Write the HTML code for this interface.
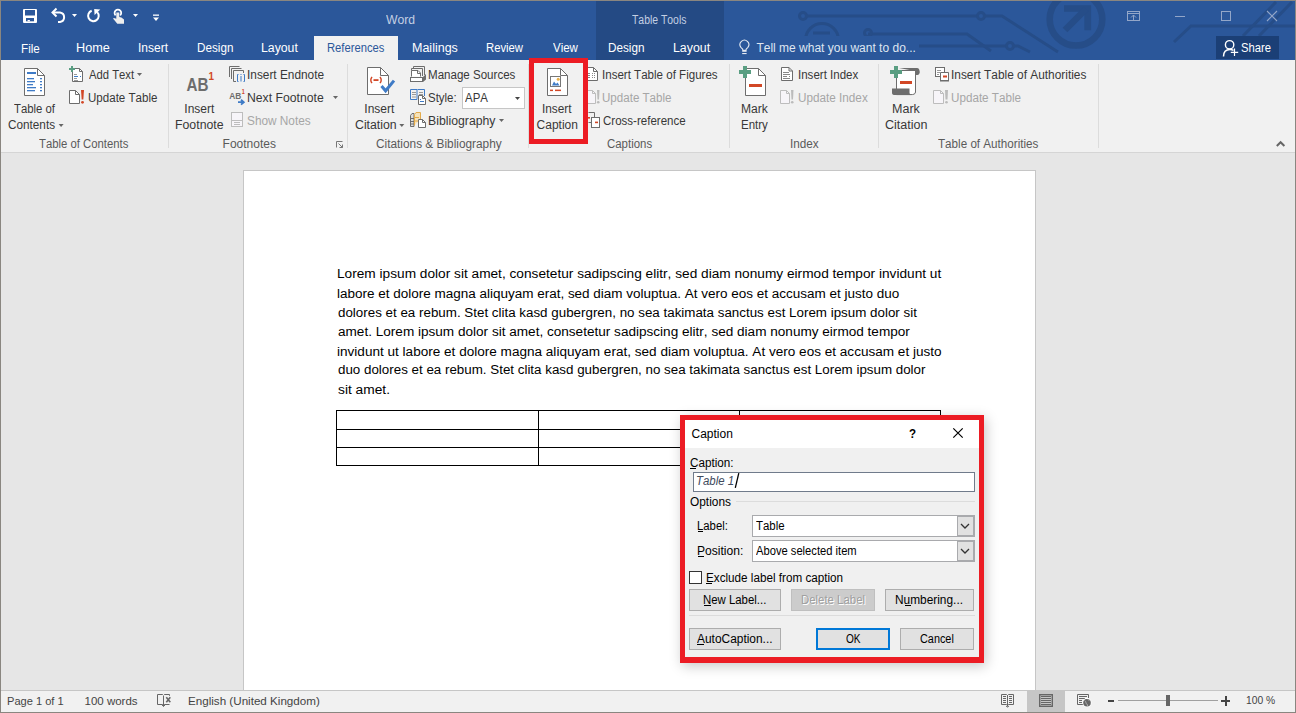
<!DOCTYPE html>
<html><head><meta charset="utf-8"><style>
html,body{margin:0;padding:0;width:1296px;height:713px;overflow:hidden;background:#8c8c8c}
body>div,body>span,body>svg{position:absolute;display:block}
.t{white-space:nowrap;line-height:1;font-family:"Liberation Sans",sans-serif;transform-origin:0 0;font-kerning:none}
</style></head><body>
<div style="left:0px;top:0px;width:1296px;height:713px;background:#8a8680;"></div>
<div style="left:1px;top:1px;width:1294px;height:59px;background:#2b579a;"></div>
<div style="left:596px;top:1px;width:128px;height:59px;background:#244a84;"></div>
<svg style="left:1px;top:1px" width="1294" height="59" viewBox="1 1 1294 59">
<g stroke="#264d88" stroke-width="3" fill="none">
<circle cx="803" cy="16" r="3.5"/><path d="M806 16H977"/><circle cx="981" cy="16" r="3.5"/><path d="M984 16H1002L1058 52"/>
<path d="M868 34H967L991 51"/><circle cx="868" cy="33" r="3.5"/>
<path d="M805.5 40A16.5 16.5 0 0 1 838.5 40"/><path d="M813 33H830"/>
<path d="M918 46H1006"/><circle cx="1010" cy="46" r="3.5"/><path d="M1013 46H1018L1030 52"/>
<circle cx="1076" cy="19.2" r="26.3" stroke-width="6.6"/>
<path d="M1064 8.5H1087.7V30.2" stroke-width="6.7"/><path d="M1065 30L1086 9" stroke-width="6.7"/>
<path d="M1174 42L1191 26H1296"/>
<path d="M1243 36L1276 2M1259 36L1292 2"/>
</g></svg>
<div style="left:724px;top:36px;width:195px;height:24px;background:#2b579a;"></div>
<span class="t" style="left:386.00px;top:14px;font-size:12px;color:#c3cfe3;transform:scaleX(1.0143);">Word</span>
<span class="t" style="left:632.00px;top:14px;font-size:12px;color:#c3cfe3;transform:scaleX(0.8683);">Table Tools</span>
<span class="t" style="left:20.53px;top:43px;font-size:12px;color:#ffffff;transform:scaleX(0.9722);">File</span>
<span class="t" style="left:76.25px;top:42px;font-size:12px;color:#ffffff;transform:scaleX(1.0548);">Home</span>
<span class="t" style="left:138.00px;top:42px;font-size:12px;color:#ffffff;">Insert</span>
<span class="t" style="left:196.53px;top:42px;font-size:12px;color:#ffffff;transform:scaleX(0.9750);">Design</span>
<span class="t" style="left:261.18px;top:42px;font-size:12px;color:#ffffff;transform:scaleX(1.0229);">Layout</span>
<span class="t" style="left:412.16px;top:42px;font-size:12px;color:#ffffff;transform:scaleX(1.0419);">Mailings</span>
<span class="t" style="left:486.36px;top:42px;font-size:12px;color:#ffffff;transform:scaleX(0.9410);">Review</span>
<span class="t" style="left:552.80px;top:42px;font-size:12px;color:#ffffff;transform:scaleX(0.9577);">View</span>
<span class="t" style="left:608.32px;top:42px;font-size:12px;color:#ffffff;transform:scaleX(0.9778);">Design</span>
<span class="t" style="left:673.17px;top:42px;font-size:12px;color:#ffffff;transform:scaleX(1.0286);">Layout</span>
<div style="left:314px;top:36px;width:84px;height:24px;background:#f1f1f1;"></div>
<span class="t" style="left:326.66px;top:42px;font-size:12px;color:#2b579a;transform:scaleX(0.9367);">References</span>
<span class="t" style="left:756.40px;top:42px;font-size:12px;color:#dfe6f1;">Tell me what you want to do...</span>
<div style="left:1216px;top:36px;width:63px;height:23px;background:#1b3f76;"></div>
<span class="t" style="left:1241.06px;top:42px;font-size:12px;color:#ffffff;transform:scaleX(0.9355);">Share</span>
<div style="left:1px;top:60px;width:1294px;height:92px;background:#f1f1f1;"></div>
<div style="left:1px;top:152px;width:1294px;height:1px;background:#d5d5d5;"></div>
<div style="left:168px;top:64px;width:1px;height:84px;background:#dcdcdc;"></div>
<div style="left:347px;top:64px;width:1px;height:84px;background:#dcdcdc;"></div>
<div style="left:729px;top:64px;width:1px;height:84px;background:#dcdcdc;"></div>
<div style="left:878px;top:64px;width:1px;height:84px;background:#dcdcdc;"></div>
<div style="left:1098px;top:64px;width:1px;height:84px;background:#dcdcdc;"></div>
<div style="left:528px;top:64px;width:1px;height:84px;background:#dcdcdc;"></div>
<span class="t" style="left:14.40px;top:103px;font-size:12px;color:#383838;transform:scaleX(0.9455);">Table of</span>
<span class="t" style="left:7.60px;top:119px;font-size:12px;color:#383838;transform:scaleX(0.9792);">Contents</span>
<span class="t" style="left:88.60px;top:69px;font-size:12px;color:#383838;transform:scaleX(0.9396);">Add Text</span>
<span class="t" style="left:87.64px;top:92px;font-size:12px;color:#383838;transform:scaleX(0.9634);">Update Table</span>
<span class="t" style="left:39.00px;top:138px;font-size:12px;color:#5a5a5a;transform:scaleX(0.9432);">Table of Contents</span>
<span class="t" style="left:184.30px;top:103px;font-size:12px;color:#383838;">Insert</span>
<span class="t" style="left:174.67px;top:119px;font-size:12px;color:#383838;transform:scaleX(1.0261);">Footnote</span>
<span class="t" style="left:247.01px;top:69px;font-size:12px;color:#383838;transform:scaleX(0.9870);">Insert Endnote</span>
<span class="t" style="left:246.98px;top:92px;font-size:12px;color:#383838;transform:scaleX(1.0176);">Next Footnote</span>
<span class="t" style="left:247.02px;top:115px;font-size:12px;color:#a6a6a6;transform:scaleX(0.9844);">Show Notes</span>
<span class="t" style="left:222.60px;top:138px;font-size:12px;color:#5a5a5a;">Footnotes</span>
<span class="t" style="left:364.30px;top:103px;font-size:12px;color:#383838;">Insert</span>
<span class="t" style="left:354.70px;top:119px;font-size:12px;color:#383838;transform:scaleX(1.0250);">Citation</span>
<span class="t" style="left:428.34px;top:69px;font-size:12px;color:#383838;transform:scaleX(0.9633);">Manage Sources</span>
<span class="t" style="left:428.35px;top:92px;font-size:12px;color:#383838;transform:scaleX(0.9536);">Style:</span>
<span class="t" style="left:428.28px;top:115px;font-size:12px;color:#383838;transform:scaleX(1.0215);">Bibliography</span>
<span class="t" style="left:375.70px;top:138px;font-size:12px;color:#5a5a5a;transform:scaleX(0.9867);">Citations &amp; Bibliography</span>
<span class="t" style="left:542.21px;top:103px;font-size:12px;color:#383838;transform:scaleX(0.9862);">Insert</span>
<span class="t" style="left:536.60px;top:119px;font-size:12px;color:#383838;">Caption</span>
<span class="t" style="left:602.34px;top:69px;font-size:12px;color:#383838;transform:scaleX(0.9630);">Insert Table of Figures</span>
<span class="t" style="left:602.34px;top:92px;font-size:12px;color:#a6a6a6;transform:scaleX(0.9648);">Update Table</span>
<span class="t" style="left:603.30px;top:115px;font-size:12px;color:#383838;transform:scaleX(0.9605);">Cross-reference</span>
<span class="t" style="left:606.60px;top:138px;font-size:12px;color:#5a5a5a;transform:scaleX(0.9532);">Captions</span>
<span class="t" style="left:740.79px;top:103px;font-size:12px;color:#383838;transform:scaleX(1.0077);">Mark</span>
<span class="t" style="left:740.84px;top:119px;font-size:12px;color:#383838;transform:scaleX(0.9593);">Entry</span>
<span class="t" style="left:797.64px;top:69px;font-size:12px;color:#383838;transform:scaleX(0.9613);">Insert Index</span>
<span class="t" style="left:797.62px;top:92px;font-size:12px;color:#a6a6a6;transform:scaleX(0.9771);">Update Index</span>
<span class="t" style="left:789.52px;top:138px;font-size:12px;color:#5a5a5a;transform:scaleX(0.9786);">Index</span>
<span class="t" style="left:892.46px;top:103px;font-size:12px;color:#383838;transform:scaleX(1.0423);">Mark</span>
<span class="t" style="left:885.00px;top:119px;font-size:12px;color:#383838;transform:scaleX(1.0450);">Citation</span>
<span class="t" style="left:951.01px;top:69px;font-size:12px;color:#383838;transform:scaleX(0.9904);">Insert Table of Authorities</span>
<span class="t" style="left:951.03px;top:92px;font-size:12px;color:#a6a6a6;transform:scaleX(0.9718);">Update Table</span>
<span class="t" style="left:938.00px;top:138px;font-size:12px;color:#5a5a5a;transform:scaleX(0.9709);">Table of Authorities</span>
<div style="left:462px;top:87px;width:63px;height:22px;background:#ffffff;box-shadow:inset 0 0 0 1px #c6c6c6"></div>
<span class="t" style="left:465.00px;top:92px;font-size:12px;color:#383838;transform:scaleX(0.9542);">APA</span>
<svg style="left:0;top:0" width="1296" height="160" viewBox="0 0 1296 160"><rect x="23" y="9" width="14" height="14" rx="1" fill="#fff"/><rect x="25" y="10" width="10" height="5.5" fill="#2b579a"/><rect x="26" y="18" width="8" height="3.3" fill="#2b579a"/><rect x="27.6" y="20" width="2.3" height="1.3" fill="#fff"/><path d="M53 12.5H60A4.8 4.8 0 0 1 60 22H58" fill="none" stroke="#fff" stroke-width="2"/><path d="M56.5 8.5L52.5 12.5L56.5 16.5" fill="none" stroke="#fff" stroke-width="2"/><path d="M72 14H77L74.5 17Z" fill="#fff"/><path d="M91.7 10.8A5.3 5.3 0 1 0 97.2 12.1" fill="none" stroke="#fff" stroke-width="2"/><path d="M94.2 9L100.3 9.6L94.6 15Z" fill="#fff"/><path d="M115.6 15.3A3.3 3.3 0 1 1 120.2 15.3" fill="none" stroke="#fff" stroke-width="1.8"/><path d="M116.3 12.5V18.8L114 18L113 18.6L117.3 23.8H124V19.6L121.4 17.6L119.3 17V12.5Z" fill="#eee"/><path d="M133 14H138L135.5 17Z" fill="#fff"/><rect x="153" y="14.5" width="6" height="1.3" fill="#fff"/><path d="M153 17.5H159L156 21Z" fill="#fff"/><rect x="1127.5" y="11.5" width="12" height="9" fill="none" stroke="#93a6c8"/><path d="M1127.5 13.5H1139.5M1133.5 20V15M1131 17.5L1133.5 15L1136 17.5" fill="none" stroke="#93a6c8"/><path d="M1175 16.5H1185" stroke="#93a6c8"/><rect x="1221.5" y="11.5" width="9" height="9" fill="none" stroke="#93a6c8"/><path d="M1267 11L1277 21M1277 11L1267 21" stroke="#93a6c8" stroke-width="1.1"/><circle cx="1229.6" cy="44.8" r="4.2" fill="none" stroke="#fff" stroke-width="1.4"/><path d="M1223.5 56.5C1223.5 52 1226 49.5 1230 49.5C1231.5 49.5 1232.5 49.8 1233.5 50.3" fill="none" stroke="#fff" stroke-width="1.5"/><path d="M1234.5 48.6V56M1230.8 52.3H1238.2" stroke="#fff" stroke-width="1.2"/><path d="M742.7 50V49.2L740.9 47.3A4.4 4.4 0 1 1 747.9 47.3L746.1 49.2V50" fill="none" stroke="#e4e9f2" stroke-width="1.1"/><rect x="742.2" y="49.8" width="4.4" height="2" fill="#e4e9f2"/><rect x="742.2" y="53" width="4.4" height="1.1" fill="#e4e9f2"/><path d="M24.5 68.5H37.5L44.5 75.5V95.5H24.5Z" fill="#fff" stroke="#6d6d6d" stroke-width="1"/><path d="M37.5 68.5V75.5H44.5" fill="none" stroke="#6d6d6d" stroke-width="1"/><rect x="27" y="72" width="9" height="2" fill="#3f7bc6"/><rect x="27" y="78" width="7" height="1.3" fill="#3f7bc6"/><rect x="40" y="78" width="2" height="1.3" fill="#3f7bc6"/><rect x="27" y="81" width="8" height="1.3" fill="#3f7bc6"/><rect x="40" y="81" width="2" height="1.3" fill="#3f7bc6"/><rect x="27" y="84" width="6" height="1.3" fill="#3f7bc6"/><rect x="40" y="84" width="2" height="1.3" fill="#3f7bc6"/><rect x="27" y="87" width="9" height="1.3" fill="#3f7bc6"/><rect x="40" y="87" width="2" height="1.3" fill="#3f7bc6"/><rect x="27" y="90" width="8" height="1.3" fill="#3f7bc6"/><rect x="40" y="90" width="2" height="1.3" fill="#3f7bc6"/><path d="M58.6 124H63.6L61.1 127Z" fill="#666"/><path d="M72.5 68.5H79.5L82.5 71.5V81.5H72.5Z" fill="#fff" stroke="#6d6d6d" stroke-width="1"/><path d="M79.5 68.5V71.5H82.5" fill="none" stroke="#6d6d6d" stroke-width="1"/><rect x="74" y="74" width="3" height="1" fill="#999"/><rect x="74" y="76" width="4" height="1" fill="#3f7bc6"/><rect x="80" y="76" width="1" height="1" fill="#3f7bc6"/><rect x="74" y="78" width="3" height="1" fill="#999"/><rect x="74" y="80" width="4" height="1" fill="#999"/><rect x="69" y="68" width="6" height="2" fill="#5a9e82"/><rect x="71" y="66" width="2" height="6" fill="#5a9e82"/><path d="M137 73H142L139.5 76Z" fill="#666"/><path d="M69.5 90.5H75.5L79.5 94.5V103.5H69.5Z" fill="#fff" stroke="#6d6d6d" stroke-width="1"/><path d="M75.5 90.5V94.5H79.5" fill="none" stroke="#6d6d6d" stroke-width="1"/><path d="M81 90H84L83.3 99.5H81.7Z" fill="#d24726"/><circle cx="82.5" cy="102.3" r="1.4" fill="#d24726"/><text x="186.5" y="91" font-family="Liberation Sans" font-weight="bold" font-size="17.5" fill="#6d6d6d" textLength="22" lengthAdjust="spacingAndGlyphs">AB</text><text x="208.5" y="80" font-family="Liberation Sans" font-weight="bold" font-size="11" fill="#d24726" textLength="5.5" lengthAdjust="spacingAndGlyphs">1</text><path d="M229.5 77V66.5H239.5M231.5 79V68.5H241.5M233.5 81.5V70.5H243.5" fill="none" stroke="#6d6d6d"/><path d="M233.5 81.5H236" fill="none" stroke="#6d6d6d"/><path d="M243.5 70.5V73" fill="none" stroke="#6d6d6d"/><path d="M238.5 74.5H237.5V81.5H238.5M243.5 74.5H244.5V81.5H243.5" fill="none" stroke="#3f7bc6"/><rect x="240.5" y="74" width="1" height="1" fill="#3f7bc6"/><rect x="240.5" y="76" width="1" height="5.5" fill="#3f7bc6"/><text x="229.3" y="98.8" font-family="Liberation Sans" font-weight="bold" font-size="9" fill="#6d6d6d" textLength="12" lengthAdjust="spacingAndGlyphs">AB</text><text x="241.8" y="94" font-family="Liberation Sans" font-weight="bold" font-size="6.5" fill="#d24726" textLength="3" lengthAdjust="spacingAndGlyphs">1</text><path d="M238 102.2H243.5M241 99.8L243.8 102.2L241 104.6" fill="none" stroke="#3f7bc6" stroke-width="1.8"/><path d="M333 96H338L335.5 99Z" fill="#666"/><rect x="231.5" y="112.5" width="11" height="14" fill="#f7f5f9" stroke="#bdbdbd"/><path d="M231.5 120.5H242.5M234 122.5H240M234 124.5H240" stroke="#bdbdbd"/><path d="M336.5 147.5V141.5H342.5" fill="none" stroke="#777"/><path d="M338.5 143.5L342.5 147.5M342.5 144.5V147.5H339.5" fill="none" stroke="#777"/><path d="M367.5 67.5H380.5L388.5 75.5V94.5H367.5Z" fill="#fff" stroke="#6d6d6d" stroke-width="1"/><path d="M380.5 67.5V75.5H388.5" fill="none" stroke="#6d6d6d" stroke-width="1"/><path d="M372 76.8Q369.6 80 372 83.2M380 76.8Q382.4 80 380 83.2" fill="none" stroke="#d24726" stroke-width="1.4"/><rect x="373.5" y="79.2" width="5" height="1.8" fill="#d24726"/><path d="M381.5 86L385.6 90.8L394 80.6" fill="none" stroke="#3f7bc6" stroke-width="3"/><path d="M399.3 124H404.3L401.8 127Z" fill="#666"/><path d="M413.5 69V66.5H424.5V75M411.5 70.5V68.5H422.5V76" fill="none" stroke="#6d6d6d"/><path d="M411.5 76.5V70.5H418L420.5 73V76.5" fill="#fff" stroke="#6d6d6d"/><path d="M417.5 70.5V73.5H420.5" fill="none" stroke="#6d6d6d"/><rect x="410.5" y="77.5" width="12" height="4" fill="#fff" stroke="#6d6d6d"/><path d="M423 77L426 74V79.5L423 82Z" fill="#6d6d6d"/><path d="M410.5 89.5H417V99.5H410.5ZM417.5 89.5H424.5V96" fill="none" stroke="#3f7bc6"/><path d="M412 92.5H416M412 94.5H416M412 97H416M419 92.5H423M419 94.5H423" stroke="#999" stroke-width="1"/><path d="M418.5 95.5H422.5L425.5 98.5V104.5H418.5Z" fill="#fff" stroke="#6d6d6d" stroke-width="1"/><path d="M422.5 95.5V98.5H425.5" fill="none" stroke="#6d6d6d" stroke-width="1"/><rect x="420" y="101" width="4" height="1" fill="#3f7bc6"/><rect x="420" y="99" width="1" height="1" fill="#3f7bc6"/><path d="M410.5 126.5V115.5L412 113.5H414V126.5Z" fill="#ddd" stroke="#6d6d6d"/><path d="M410.5 118.5H414M410.5 121.5H414M410.5 124H414" stroke="#6d6d6d"/><path d="M414.5 125.5V114.5L416 112.5H420.5V119" fill="#f6e2b8" stroke="#e3aa4a"/><path d="M415 117.5H419M415 121H418" stroke="#e3aa4a"/><path d="M418.5 119.5H422.5L425.5 122.5V127.5H418.5Z" fill="#fff" stroke="#6d6d6d" stroke-width="1"/><path d="M422.5 119.5V122.5H425.5" fill="none" stroke="#6d6d6d" stroke-width="1"/><path d="M499 119H504L501.5 122Z" fill="#666"/><path d="M515 97H520L517.5 100Z" fill="#444"/><path d="M547.5 68.5H560.5L567.5 75.5V95.5H547.5Z" fill="#fff" stroke="#6d6d6d" stroke-width="1"/><path d="M560.5 68.5V75.5H567.5" fill="none" stroke="#6d6d6d" stroke-width="1"/><rect x="550.5" y="76.5" width="10" height="10" fill="#fff" stroke="#777"/><path d="M552 85.5L554 81.5L556 84L557.5 82.5L559.5 85.5Z" fill="#3f7bc6"/><circle cx="558.2" cy="79.3" r="1.5" fill="#e8b04a"/><rect x="550" y="89.6" width="3" height="1.5" fill="#d24726"/><rect x="555" y="89.6" width="6" height="1.5" fill="#d24726"/><path d="M584.5 67.5H593.5L597.5 71.5V80.5H584.5Z" fill="#fff" stroke="#6d6d6d" stroke-width="1"/><path d="M593.5 67.5V71.5H597.5" fill="none" stroke="#6d6d6d" stroke-width="1"/><path d="M586 73.5H590M586 75.5H590M586 77.5H590" stroke="#888"/><path d="M592 73.5H593M594 73.5H595M592 75.5H593M594 75.5H595M592 77.5H593M594 77.5H595" stroke="#888"/><path d="M586.5 90.5H592.5L595.5 93.5V103.5H586.5Z" fill="#f7f5f9" stroke="#bdbdbd" stroke-width="1"/><path d="M592.5 90.5V93.5H595.5" fill="none" stroke="#bdbdbd" stroke-width="1"/><path d="M597 90H599.5L599 99.5H597.5Z" fill="#bbb"/><circle cx="598.2" cy="102.3" r="1.3" fill="#bbb"/><path d="M588.5 112.5H594.5V117M588.5 122.5H591.5" fill="none" stroke="#6d6d6d"/><rect x="591.5" y="117.5" width="8" height="10" fill="#fff" stroke="#6d6d6d"/><rect x="586" y="117" width="4" height="1.6" fill="#d24726"/><rect x="595" y="121.6" width="3" height="1.6" fill="#d24726"/><path d="M745.5 68.5H758.5L765.5 75.5V95.5H745.5Z" fill="#fff" stroke="#6d6d6d" stroke-width="1"/><path d="M758.5 68.5V75.5H765.5" fill="none" stroke="#6d6d6d" stroke-width="1"/><rect x="739" y="70" width="12" height="4" fill="#5a9e82"/><rect x="743" y="66" width="4" height="12" fill="#5a9e82"/><rect x="749" y="84" width="13" height="3" fill="#d24726"/><path d="M781.5 67.5H789.0L792.5 71.0V80.5H781.5Z" fill="#fff" stroke="#6d6d6d" stroke-width="1"/><path d="M789.0 67.5V71.0H792.5" fill="none" stroke="#6d6d6d" stroke-width="1"/><path d="M783 72.5H789M783 74.5H790M783 76.5H787M789 76.5H790M783 78.5H790" stroke="#888"/><path d="M780.5 90.5H786.5L789.5 93.5V103.5H780.5Z" fill="#f7f5f9" stroke="#bdbdbd" stroke-width="1"/><path d="M786.5 90.5V93.5H789.5" fill="none" stroke="#bdbdbd" stroke-width="1"/><path d="M791 90H793.5L793 99.5H791.5Z" fill="#bbb"/><circle cx="792.2" cy="102.3" r="1.3" fill="#bbb"/><path d="M896.5 70.5H917.5C919.5 70.5 919.5 74.5 917.5 74.5H915.5V92C915.5 94.3 913 94.6 911 94.6H896.5Z" fill="#fff" stroke="#6d6d6d"/><path d="M899 68H917C920.5 68 920.5 75 917 75H915V71Z" fill="#6d6d6d"/><path d="M892 88.5H909.5V92.5C909.5 94 910.5 95 912 95H894C892.5 95 892 94 892 92.5Z" fill="#6d6d6d"/><rect x="890" y="70" width="12" height="4" fill="#5a9e82"/><rect x="894" y="66" width="4" height="12" fill="#5a9e82"/><rect x="900" y="81" width="12" height="3" fill="#d24726"/><rect x="935.5" y="67.5" width="9" height="9" fill="#fff" stroke="#6d6d6d"/><path d="M937 70.5H941M937 72.5H940M937 74.5H939" stroke="#999"/><path d="M940.5 72.5H948.5V80.5H940.5Z" fill="#fff" stroke="#6d6d6d"/><rect x="943" y="75.5" width="4" height="2" fill="#d24726"/><rect x="940" y="80" width="9" height="1.5" fill="#6d6d6d"/><path d="M933.5 90.5H940.5L943.5 93.5V103.5H933.5Z" fill="#f7f5f9" stroke="#bdbdbd" stroke-width="1"/><path d="M940.5 90.5V93.5H943.5" fill="none" stroke="#bdbdbd" stroke-width="1"/><path d="M945 90H948L947.5 99.5H945.5Z" fill="#bbb"/><circle cx="946.5" cy="102.3" r="1.3" fill="#bbb"/><path d="M1276.8 146L1280.6 142.2L1284.4 146" fill="none" stroke="#666" stroke-width="2"/></svg>
<div style="left:1px;top:153px;width:1294px;height:537px;background:#e6e6e6;"></div>
<div style="left:243px;top:170px;width:793px;height:520px;background:#c6c6c6;"></div>
<div style="left:244px;top:171px;width:791px;height:519px;background:#ffffff;"></div>
<span class="t" style="left:336.71px;top:268px;font-size:12.5px;color:#000;transform:scaleX(1.0940);">Lorem ipsum dolor sit amet, consetetur sadipscing elitr, sed diam nonumy eirmod tempor invidunt ut</span>
<span class="t" style="left:336.72px;top:288px;font-size:12.5px;color:#000;transform:scaleX(1.0788);">labore et dolore magna aliquyam erat, sed diam voluptua. At vero eos et accusam et justo duo</span>
<span class="t" style="left:337.80px;top:307px;font-size:12.5px;color:#000;transform:scaleX(1.0695);">dolores et ea rebum. Stet clita kasd gubergren, no sea takimata sanctus est Lorem ipsum dolor sit</span>
<span class="t" style="left:337.80px;top:326px;font-size:12.5px;color:#000;transform:scaleX(1.0858);">amet. Lorem ipsum dolor sit amet, consetetur sadipscing elitr, sed diam nonumy eirmod tempor</span>
<span class="t" style="left:336.72px;top:346px;font-size:12.5px;color:#000;transform:scaleX(1.0849);">invidunt ut labore et dolore magna aliquyam erat, sed diam voluptua. At vero eos et accusam et justo</span>
<span class="t" style="left:337.80px;top:364px;font-size:12.5px;color:#000;transform:scaleX(1.0689);">duo dolores et ea rebum. Stet clita kasd gubergren, no sea takimata sanctus est Lorem ipsum dolor</span>
<span class="t" style="left:337.80px;top:384px;font-size:12.5px;color:#000;transform:scaleX(1.1000);">sit amet.</span>
<div style="left:336px;top:410px;width:605px;height:1px;background:#000;"></div>
<div style="left:336px;top:429px;width:605px;height:1px;background:#000;"></div>
<div style="left:336px;top:447px;width:605px;height:1px;background:#000;"></div>
<div style="left:336px;top:465px;width:605px;height:1px;background:#000;"></div>
<div style="left:336px;top:410px;width:1px;height:56px;background:#000;"></div>
<div style="left:538px;top:410px;width:1px;height:56px;background:#000;"></div>
<div style="left:739px;top:410px;width:1px;height:56px;background:#000;"></div>
<div style="left:940px;top:410px;width:1px;height:56px;background:#000;"></div>
<div style="left:1px;top:690px;width:1294px;height:1px;background:#c6c6c6;"></div>
<div style="left:1px;top:691px;width:1294px;height:21px;background:#f1f1f1;"></div>
<div style="left:1027px;top:691px;width:38px;height:21px;background:#c6c6c6;"></div>
<span class="t" style="left:7.34px;top:696px;font-size:11.5px;color:#444;transform:scaleX(0.9638);">Page 1 of 1</span>
<span class="t" style="left:84.50px;top:696px;font-size:11.5px;color:#444;">100 words</span>
<span class="t" style="left:187.99px;top:696px;font-size:11.5px;color:#444;transform:scaleX(1.0109);">English (United Kingdom)</span>
<span class="t" style="left:1246.10px;top:695px;font-size:11.5px;color:#444;transform:scaleX(0.8969);">100 %</span>
<div style="left:1118px;top:700px;width:100px;height:1px;background:#a0a0a0;"></div>
<div style="left:1166px;top:695px;width:4px;height:11px;background:#666;"></div>
<div style="left:1108px;top:700px;width:6px;height:2px;background:#444;"></div>
<div style="left:1221px;top:700px;width:9px;height:2px;background:#444;"></div>
<div style="left:1225px;top:696px;width:2px;height:10px;background:#444;"></div>
<svg style="left:0;top:680px" width="1296" height="33" viewBox="0 680 1296 33"><path d="M162.8 694.5H157.5V704.5H162.8M164.2 694.5H169.5V695.8M164.2 704.5H169.5M163.5 695.5V706.3M162 705L163.5 706.5L165 705" fill="none" stroke="#666"/><path d="M166.3 697.3L170.3 702.3M170.3 697.3L166.3 702.3" stroke="#666" stroke-width="1.6"/><path d="M1001.5 694.5H1006.5L1007.5 695.5L1008.5 694.5H1013.5V704.5H1008.5L1007.5 705.5L1006.5 704.5H1001.5Z" fill="none" stroke="#666"/><path d="M1007.5 695V706.5" stroke="#666"/><path d="M1006 706L1007.5 707L1009 706" fill="none" stroke="#666"/><rect x="1003" y="696" width="3" height="1" fill="#666"/><rect x="1003" y="698" width="3" height="1" fill="#666"/><rect x="1003" y="700" width="3" height="1" fill="#666"/><rect x="1003" y="702" width="3" height="1" fill="#666"/><rect x="1009" y="696" width="3" height="1" fill="#666"/><rect x="1009" y="698" width="3" height="1" fill="#666"/><rect x="1009" y="700" width="3" height="1" fill="#666"/><rect x="1009" y="702" width="3" height="1" fill="#666"/><rect x="1039.7" y="694.7" width="12.6" height="11.6" fill="none" stroke="#666" stroke-width="1.4"/><rect x="1041" y="696" width="10" height="1" fill="#666"/><rect x="1041" y="698" width="10" height="1" fill="#666"/><rect x="1041" y="700" width="10" height="1" fill="#666"/><rect x="1041" y="702" width="10" height="1" fill="#666"/><rect x="1041" y="704" width="10" height="1" fill="#666"/><path d="M1084 704.5H1077.5V694.5H1088.5V698" fill="none" stroke="#666"/><rect x="1079" y="696" width="8" height="1" fill="#666"/><rect x="1079" y="698" width="6" height="1" fill="#666"/><rect x="1079" y="700" width="3" height="1" fill="#666"/><rect x="1079" y="702" width="3" height="1" fill="#666"/><circle cx="1087" cy="702.7" r="4.6" fill="#fff"/><circle cx="1087" cy="702.7" r="3.8" fill="#666"/><path d="M1084.5 700.5Q1086.5 701.5 1086 703.5Q1088 704 1087.5 706M1088 699.5L1089.5 701" stroke="#aaa" stroke-width="1" fill="none"/></svg>
<div style="left:680px;top:415px;width:304px;height:248px;background:#ec1c24;box-shadow:2px 3px 12px rgba(0,0,0,0.22)"></div>
<div style="left:685px;top:420px;width:294px;height:237px;background:#f0f0f0;"></div>
<div style="left:685px;top:420px;width:294px;height:28px;background:#ffffff;"></div>
<span class="t" style="left:691.50px;top:428px;font-size:12px;color:#000;">Caption</span>
<span class="t" style="left:909.34px;top:427px;font-size:13.5px;color:#000;font-weight:bold;transform:scaleX(0.8571);">?</span>
<svg style="left:952px;top:427px;" width="12" height="12" viewBox="0 0 12 12"><path d="M1.3 1.3L10.7 10.7M10.7 1.3L1.3 10.7" stroke="#000" stroke-width="1.2"/></svg>
<span class="t" style="left:689.60px;top:457px;font-size:12px;color:#000;transform:scaleX(0.9750);">Caption:</span>
<div style="left:690px;top:468px;width:6px;height:1px;background:#000;"></div>
<div style="left:693px;top:472px;width:282px;height:20px;background:#ffffff;box-shadow:inset 0 0 0 1px #707b8b"></div>
<span class="t" style="left:696.05px;top:475px;font-size:12px;color:#3e4a5c;font-style:italic;transform:scaleX(0.9526);">Table 1</span>
<svg style="left:733px;top:472px;" width="8" height="18" viewBox="0 0 8 18"><path d="M5.8 1.2L2.3 15.8" stroke="#000" stroke-width="1.3"/></svg>
<span class="t" style="left:689.60px;top:496px;font-size:12px;color:#000;transform:scaleX(0.9902);">Options</span>
<div style="left:736px;top:501px;width:239px;height:1px;background:#dcdcdc;"></div>
<span class="t" style="left:697.25px;top:520px;font-size:12px;color:#000;transform:scaleX(0.9452);">Label:</span>
<div style="left:698px;top:531px;width:5px;height:1px;background:#000;"></div>
<span class="t" style="left:697.19px;top:545px;font-size:12px;color:#000;transform:scaleX(1.0068);">Position:</span>
<div style="left:698px;top:556px;width:6px;height:1px;background:#000;"></div>
<div style="left:752px;top:515px;width:223px;height:22px;background:#ffffff;box-shadow:inset 0 0 0 1px #a9aaad"></div>
<div style="left:957px;top:515px;width:18px;height:22px;background:#a9aaad;"></div>
<div style="left:958px;top:517px;width:15px;height:18px;background:#e1e1e1;"></div>
<svg style="left:960px;top:523px;" width="10" height="6" viewBox="0 0 10 6"><path d="M1 1L5 5L9 1" stroke="#333" stroke-width="1.3" fill="none"/></svg>
<div style="left:752px;top:540px;width:223px;height:22px;background:#ffffff;box-shadow:inset 0 0 0 1px #a9aaad"></div>
<div style="left:957px;top:540px;width:18px;height:22px;background:#a9aaad;"></div>
<div style="left:958px;top:542px;width:15px;height:18px;background:#e1e1e1;"></div>
<svg style="left:960px;top:548px;" width="10" height="6" viewBox="0 0 10 6"><path d="M1 1L5 5L9 1" stroke="#333" stroke-width="1.3" fill="none"/></svg>
<span class="t" style="left:756.40px;top:520px;font-size:12px;color:#000;transform:scaleX(0.9533);">Table</span>
<span class="t" style="left:756.40px;top:545px;font-size:12px;color:#000;transform:scaleX(0.9315);">Above selected item</span>
<div style="left:689px;top:571px;width:13px;height:13px;background:#ffffff;box-shadow:inset 0 0 0 1px #333"></div>
<span class="t" style="left:705.63px;top:572px;font-size:12px;color:#000;transform:scaleX(0.9741);">Exclude label from caption</span>
<div style="left:706px;top:583px;width:6px;height:1px;background:#000;"></div>
<div style="left:689px;top:589px;width:92px;height:22px;background:#e1e1e1;box-shadow:inset 0 0 0 1px #adadad"></div>
<span class="t" style="left:703.05px;top:594px;font-size:12px;color:#000;transform:scaleX(0.9492);">New Label...</span>
<div style="left:704px;top:605px;width:7px;height:1px;background:#000;"></div>
<div style="left:791px;top:589px;width:84px;height:22px;background:#cccccc;box-shadow:inset 0 0 0 1px #bfbfbf"></div>
<span class="t" style="left:800.95px;top:594px;font-size:12px;color:#a0a0a0;transform:scaleX(0.9500);text-shadow:1px 1px 0 #fff">Delete Label</span>
<div style="left:885px;top:589px;width:89px;height:22px;background:#e1e1e1;box-shadow:inset 0 0 0 1px #adadad"></div>
<span class="t" style="left:895.31px;top:594px;font-size:12px;color:#000;transform:scaleX(0.9896);">Numbering...</span>
<div style="left:905px;top:605px;width:6px;height:1px;background:#000;"></div>
<div style="left:689px;top:615px;width:286px;height:1px;background:#dcdcdc;"></div>
<div style="left:689px;top:628px;width:92px;height:22px;background:#e1e1e1;box-shadow:inset 0 0 0 1px #adadad"></div>
<span class="t" style="left:697.00px;top:633px;font-size:12px;color:#000;transform:scaleX(0.9933);">AutoCaption...</span>
<div style="left:697px;top:644px;width:7px;height:1px;background:#000;"></div>
<div style="left:816px;top:628px;width:74px;height:22px;background:#e1e1e1;box-shadow:inset 0 0 0 2px #0078d7"></div>
<span class="t" style="left:845.60px;top:633px;font-size:12px;color:#000;transform:scaleX(0.8412);">OK</span>
<div style="left:900px;top:628px;width:74px;height:22px;background:#e1e1e1;box-shadow:inset 0 0 0 1px #adadad"></div>
<span class="t" style="left:920.20px;top:633px;font-size:12px;color:#000;transform:scaleX(0.9054);">Cancel</span>
<div style="left:529px;top:58px;width:59px;height:86px;background:transparent;box-shadow:inset 0 0 0 5px #ec1c24"></div>
</body></html>
